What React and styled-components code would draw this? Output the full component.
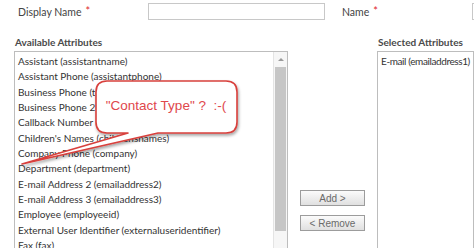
import styled, { createGlobalStyle } from "styled-components";

const Global = createGlobalStyle`
  html, body {
    margin: 0;
    padding: 0;
    background: #fff;
    overflow: hidden;
  }
  body {
    font-family: Lato, "Open Sans", sans-serif;
    color: #444;
  }
`;

const Page = styled.div`
  position: relative;
  width: 474px;
  height: 248px;
  overflow: hidden;
`;

//상단 이름 입력줄
const TopRow = styled.div`
  display: grid;
  grid-template-columns: 130px 177px 17px 130px 40px;
  align-items: center;
  height: 16px;
  padding: 3px 0 0 18px;
`;
const Label = styled.div`
  font-size: 10.5px;
  color: #444;
  white-space: nowrap;
`;
const Star = styled.span`
  color: #e0262b;
  margin-left: 4px;
  font-size: 11px;
  vertical-align: top;
  line-height: 10px;
`;
const TextBox = styled.div`
  box-sizing: border-box;
  height: 17px;
  border: 1px solid #c8c8c8;
  background: #fff;
`;

//속성 목록 영역
const Columns = styled.div`
  display: grid;
  grid-template-columns: 274px 89px 1fr;
  padding: 15px 0 0 14px;
`;
const Col = styled.div`
  display: flex;
  flex-direction: column;
  min-width: 0;
`;
const Heading = styled.div`
  font-size: 10px;
  font-weight: 700;
  color: #4a4a4a;
  height: 17px;
  line-height: 17px;
  padding-left: 1px;
  white-space: nowrap;
`;
const ListBox = styled.div`
  box-sizing: border-box;
  height: 210px;
  border: 1px solid #bdbdbd;
  border-bottom: none;
  display: flex;
  background: #fff;
`;
const Items = styled.ul`
  flex: 1;
  list-style: none;
  margin: 0;
  padding: 2px 0 0 3px;
`;
const Item = styled.li`
  font-size: 10px;
  height: 15.35px;
  line-height: 15.35px;
  color: #333;
  white-space: nowrap;
  letter-spacing: ${(p) => (p.$tight ? "-0.4px" : "normal")};
`;
const ScrollBar = styled.div`
  width: 13px;
  display: flex;
  flex-direction: column;
  background: #f6f6f6;
  border-left: 1px solid #e4e4e4;
`;
const ArrowUp = styled.div`
  height: 15px;
  display: flex;
  align-items: center;
  justify-content: center;
  &::after {
    content: "";
    border-left: 3px solid transparent;
    border-right: 3px solid transparent;
    border-bottom: 3px solid #9a9a9a;
  }
`;
const Thumb = styled.div`
  height: 164px;
  margin: 0 1px;
  background: #c6c6c6;
`;

const Buttons = styled.div`
  display: flex;
  flex-direction: column;
  gap: 9px;
  padding: 156px 0 0 12px;
`;
const Button = styled.div`
  box-sizing: border-box;
  width: 65px;
  height: 16px;
  border: 1px solid #9c9c9c;
  background: linear-gradient(#fbfbfb, #e0e0e0);
  font-family: "Liberation Sans", Arial, sans-serif;
  font-size: 10px;
  color: #6a6a6a;
  display: flex;
  align-items: center;
  justify-content: center;
`;

//말풍선
const Callout = styled.div`
  position: absolute;
  left: 0;
  top: 0;
  width: 474px;
  height: 248px;
  pointer-events: none;
`;
const CalloutText = styled.div`
  position: absolute;
  left: 98px;
  top: 98px;
  width: 136px;
  text-align: center;
  font-family: "Liberation Sans", Arial, sans-serif;
  font-size: 13.5px;
  color: #e0474c;
  white-space: pre;
`;

const available = [
  "Assistant (assistantname)",
  "Assistant Phone (assistantphone)",
  "Business Phone (telephone1)",
  "Business Phone 2 (business2)",
  "Callback Number (callback)",
  "Children's Names (childrensnames)",
  "Company Phone (company)",
  "Department (department)",
  "E-mail Address 2 (emailaddress2)",
  "E-mail Address 3 (emailaddress3)",
  "Employee (employeeid)",
  "External User Identifier (externaluseridentifier)",
  "Fax (fax)",
];

export default function App() {
  return (
    <>
      <Global />
      <Page>
        <TopRow>
          <Label>
            Display Name<Star>*</Star>
          </Label>
          <TextBox />
          <span />
          <Label>
            Name<Star>*</Star>
          </Label>
          <TextBox />
        </TopRow>
        <Columns>
          <Col>
            <Heading>Available Attributes</Heading>
            <ListBox>
              <Items>
                {available.map((a) => (
                  <Item key={a}>{a}</Item>
                ))}
              </Items>
              <ScrollBar>
                <ArrowUp />
                <Thumb />
              </ScrollBar>
            </ListBox>
          </Col>
          <Buttons>
            <Button>Add &gt;</Button>
            <Button>&lt; Remove</Button>
          </Buttons>
          <Col>
            <Heading>Selected Attributes</Heading>
            <ListBox>
              <Items>
                <Item $tight>E-mail (emailaddress1)</Item>
              </Items>
            </ListBox>
          </Col>
        </Columns>
        <Callout>
          <svg width="474" height="248" viewBox="0 0 474 248">
            <defs>
              <filter id="sh" x="-20%" y="-20%" width="140%" height="150%">
                <feDropShadow dx="1" dy="2" stdDeviation="1.5" floodColor="#000" floodOpacity="0.35" />
              </filter>
            </defs>
            <path
              d="M107 81 H226 Q237 81 237 92 V122 Q237 133 226 133 H158 L22 164 L128 133 H107 Q96 133 96 122 V92 Q96 81 107 81 Z"
              fill="#fff"
              stroke="#d8403c"
              strokeWidth="1.6"
              strokeLinejoin="round"
              filter="url(#sh)"
            />
          </svg>
          <CalloutText>{'"Contact Type" ?  :-('}</CalloutText>
        </Callout>
      </Page>
    </>
  );
}
